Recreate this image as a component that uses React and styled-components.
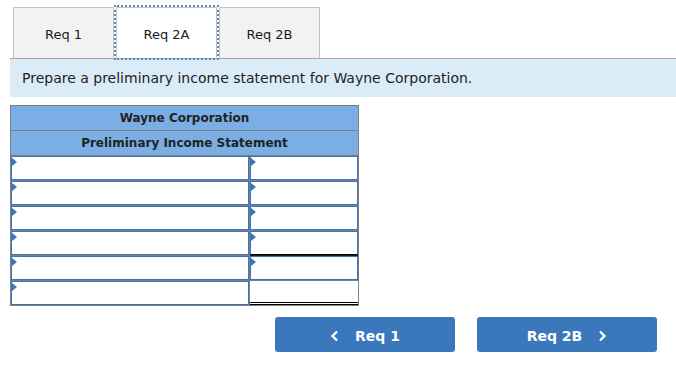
import styled, { createGlobalStyle } from "styled-components";

const GlobalStyle = createGlobalStyle`
  body {
    margin: 0;
    background: #ffffff;
    font-family: "DejaVu Sans", Verdana, sans-serif;
  }
`;

const Page = styled.div`
  padding: 7px 0 0 10px;
`;

const TabStrip = styled.div`
  display: flex;
  gap: 2px;
  padding-left: 3px;
  border-bottom: 1px solid #a6a6a6;
`;

const Tab = styled.div`
  width: 101px;
  height: 51px;
  box-sizing: border-box;
  display: flex;
  align-items: center;
  justify-content: center;
  border: 1px solid #c4c4c4;
  border-bottom: none;
  background: ${(p) => (p.$active ? "#ffffff" : "#f2f2f2")};
  outline: ${(p) => (p.$active ? "2px dotted #5a86c6" : "none")};
  font-size: 13px;
  color: #1a1a1a;
  padding-top: 2px;
`;

const Instruction = styled.div`
  height: 38px;
  display: flex;
  align-items: center;
  padding-left: 12px;
  background: #dbecf9;
  font-size: 14px;
  color: #222;
`;

const Sheet = styled.div`
  margin-top: 8px;
  width: 349px;
  box-sizing: border-box;
  display: grid;
  grid-template-columns: 238px 108px;
  grid-auto-rows: 24px;
  gap: 1px;
  border: 1px solid #7f7f7f;
  background: #7f7f7f;
`;

const HeaderCell = styled.div`
  grid-column: 1 / -1;
  display: flex;
  align-items: center;
  justify-content: center;
  background: #7aaee4;
  font-size: 12px;
  font-weight: bold;
  color: #222;
`;

const InputCell = styled.div`
  position: relative;
  box-sizing: border-box;
  background: #ffffff;
  border: 1px solid #3d75bb;
  ${(p) => p.$underline && "border-bottom: 1px solid #000; box-shadow: 0 1px 0 #0a1a33;"}

  &::before {
    content: "";
    position: absolute;
    top: 1px;
    left: 0;
    border-left: 5px solid #3d75bb;
    border-top: 4px solid transparent;
    border-bottom: 4px solid transparent;
  }
`;

const TotalCell = styled.div`
  box-sizing: border-box;
  background: #ffffff;
  border-bottom: 3px double #000;
`;

const Actions = styled.div`
  display: flex;
  justify-content: flex-end;
  gap: 22px;
  padding-right: 19px;
  margin-top: 11px;
`;

const NavButton = styled.button`
  width: 180px;
  height: 35px;
  display: flex;
  align-items: center;
  justify-content: center;
  gap: 16px;
  border: none;
  border-radius: 3px;
  background: #3b77bb;
  color: #ffffff;
  font-family: "DejaVu Sans", Verdana, sans-serif;
  font-size: 14px;
  font-weight: bold;
  padding: 2px 0 0;
`;

const Chevron = ({ dir }) => (
  <svg width="9" height="12" viewBox="0 0 9 12">
    <polyline
      points={dir === "left" ? "7,1.5 2.5,6 7,10.5" : "2,1.5 6.5,6 2,10.5"}
      fill="none"
      stroke="#ffffff"
      strokeWidth="2.4"
    />
  </svg>
);

const rows = [
  { right: "input" },
  { right: "input" },
  { right: "input" },
  { right: "input", underline: true },
  { right: "input" },
  { right: "total" },
];

export default function App() {
  return (
    <Page>
      <GlobalStyle />
      <TabStrip>
        <Tab>Req 1</Tab>
        <Tab $active>Req 2A</Tab>
        <Tab>Req 2B</Tab>
      </TabStrip>
      <Instruction>
        Prepare a preliminary income statement for Wayne Corporation.
      </Instruction>

      <Sheet>
        <HeaderCell>Wayne Corporation</HeaderCell>
        <HeaderCell>Preliminary Income Statement</HeaderCell>
        {rows.map((row, i) => [
          <InputCell key={`l${i}`} />,
          row.right === "total" ? (
            <TotalCell key={`r${i}`} />
          ) : (
            <InputCell key={`r${i}`} $underline={row.underline} />
          ),
        ])}
      </Sheet>

      <Actions>
        <NavButton>
          <Chevron dir="left" />
          Req 1
        </NavButton>
        <NavButton>
          Req 2B
          <Chevron dir="right" />
        </NavButton>
      </Actions>
    </Page>
  );
}
